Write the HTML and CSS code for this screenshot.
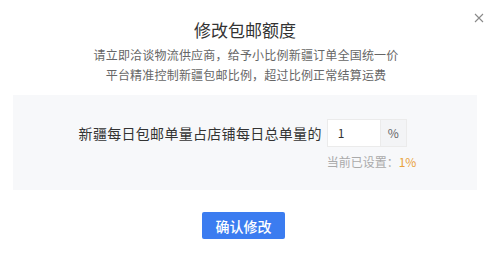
FILE: index.html
```html
<!DOCTYPE html>
<html lang="zh">
<head>
<meta charset="utf-8">
<link rel="stylesheet" href="styles.css">
</head>
<body>
<div class="modal">
  <button class="close" aria-label="关闭">
    <svg width="10" height="10" viewBox="0 0 10 10"><path d="M1 1L9 9M9 1L1 9" stroke="#8a8a8a" stroke-width="1.1" fill="none"/></svg>
  </button>
  <h1 class="title">修改包邮额度</h1>
  <p class="desc">请立即洽谈物流供应商，给予小比例新疆订单全国统一价<br>平台精准控制新疆包邮比例，超过比例正常结算运费</p>
  <div class="panel">
    <div class="row">
      <span class="label">新疆每日包邮单量占店铺每日总单量的</span>
      <div class="field">
        <div class="group">
          <span class="input">1</span>
          <span class="addon">%</span>
        </div>
        <div class="hint">当前已设置：<span class="val">1%</span></div>
      </div>
    </div>
  </div>
  <div class="actions">
    <button class="btn">确认修改</button>
  </div>
</div>
</body>
</html>
```
FILE: styles.css
```css
html, body {
  margin: 0;
  padding: 0;
  background: #fff;
}
body {
  font-family: "Noto Sans CJK SC", "Noto Sans", sans-serif;
  color: #333;
}
.modal {
  position: relative;
  width: 498px;
  height: 261px;
  box-sizing: border-box;
  padding: 18px 21px 0 13px;
}
.close {
  position: absolute;
  top: 13px;
  right: 14px;
  width: 10px;
  height: 10px;
  padding: 0;
  border: 0;
  background: none;
  display: flex;
}
.title {
  margin: 0;
  font-size: 17px;
  line-height: 24px;
  font-weight: 400;
  text-align: center;
  color: #333;
}
.desc {
  margin: 3px 0 0;
  font-size: 12px;
  line-height: 20px;
  text-align: center;
  color: #666;
  letter-spacing: 0.2px;
  padding-left: 2px;
}
.panel {
  margin-top: 10px;
  background: #f7f8fa;
  padding: 24px 0 20px;
  display: flex;
  justify-content: center;
}
.row {
  display: flex;
  align-items: flex-start;
  gap: 5px;
  padding-left: 5px;
}
.label {
  font-size: 14px;
  line-height: 28px;
  color: #333;
  letter-spacing: 0.3px;
}
.field {
  display: flex;
  flex-direction: column;
}
.group {
  display: flex;
  height: 28px;
}
.input {
  width: 53px;
  box-sizing: border-box;
  background: #fff;
  border: 1px solid #ebebeb;
  border-right: 0;
  font-size: 12px;
  line-height: 26px;
  padding-left: 10px;
  color: #333;
}
.addon {
  width: 27px;
  box-sizing: border-box;
  background: #f3f4f6;
  border: 1px solid #ebebeb;
  font-size: 12px;
  line-height: 26px;
  text-align: center;
  color: #666;
}
.hint {
  margin-top: 7px;
  font-size: 12px;
  line-height: 16px;
  color: #aaa;
  white-space: nowrap;
}
.val {
  color: #e9a23b;
}
.actions {
  margin-top: 22px;
  display: flex;
  justify-content: center;
}
.btn {
  width: 83px;
  height: 27px;
  border: 0;
  border-radius: 2px;
  background: #3b7cf0;
  color: #fff;
  font-family: "Noto Sans CJK SC", sans-serif;
  font-size: 14px;
  font-weight: 500;
  padding: 0;
  margin-right: 3px;
}
```
